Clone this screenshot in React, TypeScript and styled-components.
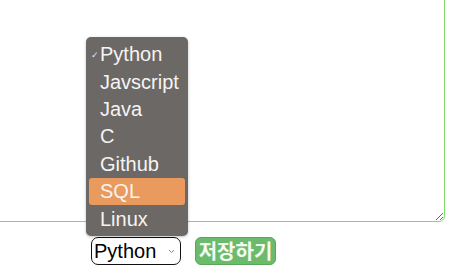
import styled, { createGlobalStyle } from "styled-components";

const GlobalStyle = createGlobalStyle`
  body {
    margin: 0;
    background: #ffffff;
    font-family: "Liberation Sans", Arial, sans-serif;
    overflow: hidden;
  }
`;

const Page = styled.div`
  position: relative;
  width: 474px;
  height: 277px;
  overflow: hidden;
  display: flex;
  flex-direction: column;
`;

const Editor = styled.textarea`
  display: block;
  margin: -30px 0 0 -10px;
  width: 455px;
  height: 252px;
  box-sizing: border-box;
  border: 1.5px solid #7edb6a;
  border-radius: 6px;
  background: #ffffff;
  resize: vertical;
  outline: none;
`;

const Controls = styled.div`
  display: flex;
  align-items: center;
  gap: 14px;
  margin-top: 15px;
  padding-left: 91px;
`;

const LangSelect = styled.div`
  width: 90px;
  height: 28px;
  box-sizing: border-box;
  border: 1px solid #111111;
  border-radius: 7px;
  display: flex;
  align-items: center;
  justify-content: space-between;
  padding: 0 5px 0 2px;
  font-size: 20px;
  color: #000000;
`;

const Chevron = styled.svg`
  width: 7px;
  height: 5px;
`;

const SaveButton = styled.button`
  width: 81px;
  height: 28px;
  box-sizing: border-box;
  border: 1px solid #58a858;
  border-radius: 6px;
  background: #6cba6c;
  color: #f4fbf2;
  font-family: "Noto Sans CJK KR", sans-serif;
  font-weight: 700;
  font-size: 20px;
  padding: 0;
  line-height: 1;
`;

const Menu = styled.ul`
  position: absolute;
  left: 86px;
  top: 37px;
  width: 102px;
  height: 199px;
  box-sizing: border-box;
  margin: 0;
  padding: 4px 3px;
  list-style: none;
  background: #6b6866;
  border-radius: 5px;
  box-shadow: 0 1px 3px rgba(0, 0, 0, 0.25);
`;

const Item = styled.li<{ active?: boolean }>`
  position: relative;
  height: 27.4px;
  display: flex;
  align-items: center;
  padding-left: 11px;
  border-radius: 3px;
  font-size: 20px;
  color: #f6f4f2;
  background: ${(p) => (p.active ? "#e99a5c" : "transparent")};
`;

const Check = styled.span`
  position: absolute;
  left: 2px;
  top: 9px;
  font-size: 9px;
  color: #e8e6e4;
`;

const languages = ["Python", "Javscript", "Java", "C", "Github", "SQL", "Linux"];

const App = () => {
  return (
    <Page>
      <GlobalStyle />
      <Editor />
      <Controls>
        <LangSelect>
          Python
          <Chevron viewBox="0 0 7 5">
            <path d="M1 1 L3.5 3.5 L6 1" fill="none" stroke="#888" strokeWidth="1" />
          </Chevron>
        </LangSelect>
        <SaveButton>저장하기</SaveButton>
      </Controls>
      <Menu>
        {languages.map((lang) => (
          <Item key={lang} active={lang === "SQL"}>
            {lang === "Python" && <Check>✓</Check>}
            {lang}
          </Item>
        ))}
      </Menu>
    </Page>
  );
};

export default App;
